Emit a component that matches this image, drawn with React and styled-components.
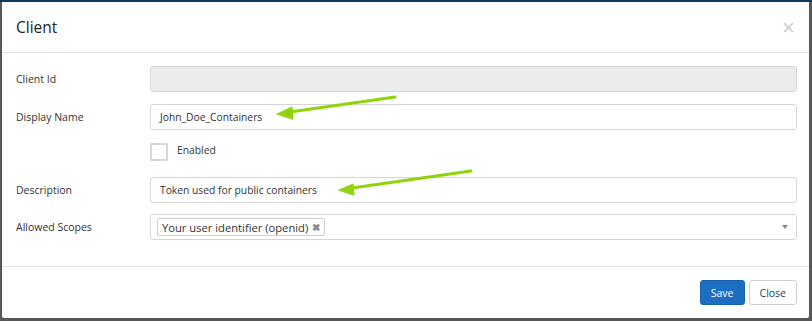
import React from "react";
import styled, { createGlobalStyle } from "styled-components";

const Global = createGlobalStyle`
  html, body { margin: 0; padding: 0; }
  body { font-family: "Open Sans", "Noto Sans", sans-serif; background: #575757; }
  * { box-sizing: border-box; }
`;

const Backdrop = styled.div`
  width: 812px;
  height: 321px;
  background: #575757;
  border-top: 2px solid #0e3a5d;
  padding: 0 3px 3px 2px;
  overflow: hidden;
`;

const Modal = styled.div`
  position: relative;
  background: #fff;
  height: 316px;
  display: flex;
  flex-direction: column;
  border-radius: 0 0 2px 2px;
`;

const Header = styled.div`
  height: 51px;
  display: flex;
  align-items: center;
  justify-content: space-between;
  padding: 0 14px 0 14px;
  border-bottom: 1px solid #e3e3e3;
`;

const Title = styled.h5`
  margin: 0;
  font-size: 15.5px;
  font-weight: 400;
  color: #222;
`;

const CloseX = styled.button`
  border: none;
  background: none;
  padding: 0;
  width: 14px;
  height: 14px;
  display: flex;
  align-items: center;
  justify-content: center;
`;

const Body = styled.div`
  flex: 1;
  padding: 13px 12px 0 14px;
  display: grid;
  grid-template-columns: 134px 1fr;
  grid-auto-rows: auto;
  row-gap: 12px;
  align-content: start;
`;

const Label = styled.label`
  font-size: 10.5px;
  color: #333;
  display: flex;
  align-items: center;
  height: 26px;
  margin-top: ${(p) => p.shift || 0}px;
`;

const Input = styled.div`
  height: 26px;
  border: 1px solid #d6d6d6;
  border-radius: 3px;
  background: ${(p) => (p.disabled ? "#ebeced" : "#fff")};
  font-size: 10.3px;
  color: #333;
  display: flex;
  align-items: center;
  padding: 0 9px;
`;

const CheckRow = styled.div`
  display: flex;
  align-items: flex-start;
  gap: 9px;
  height: 18px;
  margin-top: 1px;
  margin-bottom: 4px;
`;

const Box = styled.span`
  width: 18px;
  height: 18px;
  border: 2px solid #d6d6d6;
  border-radius: 1px;
  background: #fff;
`;

const CheckLabel = styled.span`
  font-size: 10.3px;
  color: #333;
  line-height: 14px;
`;

const Select = styled.div`
  height: 26px;
  margin-top: ${(p) => p.shift || 0}px;
  border: 1px solid #d6d6d6;
  border-radius: 3px;
  display: flex;
  align-items: center;
  justify-content: space-between;
  padding: 0 8px 0 6px;
`;

const Tag = styled.span`
  height: 18px;
  border: 1px solid #cfcfcf;
  border-radius: 2px;
  padding: 0 4px 0 4px;
  display: inline-flex;
  align-items: center;
  gap: 4px;
  font-size: 11.2px;
  color: #333;
`;

const TagX = styled.span`
  color: #888;
  font-size: 10px;
  font-weight: 700;
`;

const Caret = styled.span`
  width: 0;
  height: 0;
  border-left: 3px solid transparent;
  border-right: 3px solid transparent;
  border-top: 4px solid #888;
`;

const Footer = styled.div`
  height: 52px;
  border-top: 1px solid #e3e3e3;
  display: flex;
  align-items: center;
  justify-content: flex-end;
  gap: 4px;
  padding: 0 12px 0 0;
`;

const Button = styled.button`
  height: 25px;
  padding: 0 ${(p) => (p.primary ? 10 : 10)}px;
  font-family: inherit;
  font-size: 10.5px;
  border-radius: 3px;
  border: 1px solid ${(p) => (p.primary ? "#1861ac" : "#cfcfcf")};
  background: ${(p) => (p.primary ? "#1b6ec2" : "#fff")};
  color: ${(p) => (p.primary ? "#fff" : "#1d3f66")};
`;

const Arrows = styled.svg`
  position: absolute;
  left: -2px;
  top: -2px;
  pointer-events: none;
`;

export default function App() {
  return (
    <>
      <Global />
      <Backdrop>
        <Modal>
          <Header>
            <Title>Client</Title>
            <CloseX aria-label="close">
              <svg width="11" height="11" viewBox="0 0 11 11">
                <path d="M1 1L10 10M10 1L1 10" stroke="#c9c9c9" strokeWidth="1.6" />
              </svg>
            </CloseX>
          </Header>
          <Body>
            <Label>Client Id</Label>
            <Input disabled />
            <Label>Display Name</Label>
            <Input>John_Doe_Containers</Input>
            <span />
            <CheckRow>
              <Box />
              <CheckLabel>Enabled</CheckLabel>
            </CheckRow>
            <Label>Description</Label>
            <Input>Token used for public containers</Input>
            <Label shift={-1}>Allowed Scopes</Label>
            <Select shift={-1}>
              <Tag>
                Your user identifier (openid) <TagX>✖</TagX>
              </Tag>
              <Caret />
            </Select>
          </Body>
          <Footer>
            <Button primary>Save</Button>
            <Button>Close</Button>
          </Footer>
          <Arrows width="812" height="321" viewBox="0 0 812 321">
            <g fill="#8fd40a" stroke="#8fd40a" strokeWidth="3" strokeLinecap="round">
              <line x1="395" y1="97" x2="290" y2="112" />
              <polygon points="277,114 292,107 293,119" strokeWidth="1" />
              <line x1="471" y1="171" x2="352" y2="188" />
              <polygon points="339,190 353,184 354,195" strokeWidth="1" />
            </g>
          </Arrows>
        </Modal>
      </Backdrop>
    </>
  );
}
